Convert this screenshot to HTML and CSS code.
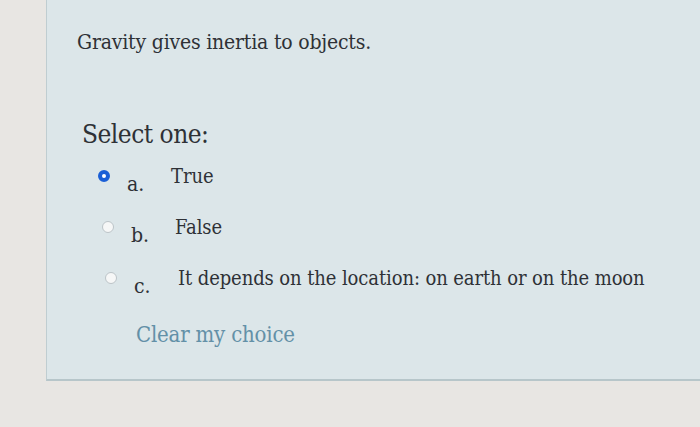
FILE: index.html
```html
<!DOCTYPE html>
<html>
<head>
<meta charset="utf-8">
<link rel="stylesheet" href="styles.css">
</head>
<body>
<div class="page">
  <div class="panel">
    <div class="question">Gravity gives inertia to objects.</div>
    <div class="prompt">Select one:</div>
    <div class="answers">
      <div class="option opt-a">
        <span class="radio checked"></span>
        <span class="label">a.</span>
        <span class="text">True</span>
      </div>
      <div class="option opt-b">
        <span class="radio"></span>
        <span class="label">b.</span>
        <span class="text">False</span>
      </div>
      <div class="option opt-c">
        <span class="radio"></span>
        <span class="label">c.</span>
        <span class="text">It depends on the location: on earth or on the moon</span>
      </div>
    </div>
    <a class="clear" href="#">Clear my choice</a>
  </div>
</div>
</body>
</html>
```

FILE: styles.css
```css
html, body {
  margin: 0;
  padding: 0;
}
body {
  width: 700px;
  height: 427px;
  overflow: hidden;
  background: #e8e6e3;
  font-family: "DejaVu Serif Condensed", "DejaVu Serif", serif;
  font-stretch: condensed;
  color: #2e3136;
}
.page {
  padding-left: 46px;
}
.panel {
  height: 381px;
  box-sizing: border-box;
  background: #dce6e9;
  border-left: 1px solid #bfcdd1;
  border-bottom: 2px solid #b7c6ca;
  padding: 27px 0 0 30px;
  display: flex;
  flex-direction: column;
}
.question {
  font-size: 21px;
  line-height: 30px;
  letter-spacing: -0.2px;
}
.prompt {
  margin-top: 61px;
  margin-left: 5px;
  font-size: 26px;
  line-height: 32px;
  letter-spacing: -0.5px;
}
.answers {
  margin-top: 12px;
  display: flex;
  flex-direction: column;
  gap: 15px;
}
.option {
  display: flex;
  align-items: flex-start;
  font-size: 20px;
  line-height: 28px;
}
.opt-a { margin-left: 21px; }
.opt-b { margin-left: 25px; }
.opt-c { margin-left: 28px; }
.radio {
  width: 12px;
  height: 12px;
  margin-top: 8px;
  border-radius: 50%;
  box-sizing: border-box;
  border: 1px solid #bcc4c8;
  background: #f6f7f7;
  flex: none;
}
.radio.checked {
  border: 4px solid #1a5fd6;
  background: #ffffff;
}
.label {
  width: 44px;
  margin-left: 17px;
  padding-top: 8px;
  font-size: 21px;
}
.text {
  letter-spacing: -0.1px;
}
.clear {
  margin-top: 22px;
  margin-left: 59px;
  font-size: 22px;
  color: #6390a7;
  text-decoration: none;
  letter-spacing: -0.2px;
}
```
